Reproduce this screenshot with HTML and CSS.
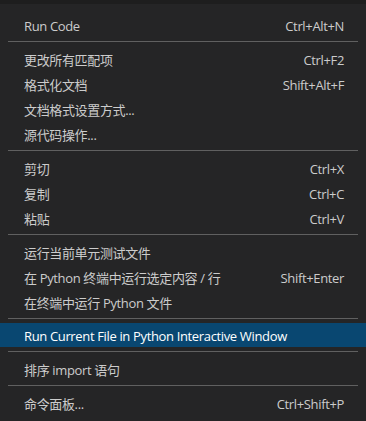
FILE: index.html
```html
<!DOCTYPE html>
<html lang="zh-CN">
<head>
<meta charset="UTF-8">
<title>Context menu</title>
<link rel="stylesheet" href="styles.css">
</head>
<body>
<div class="topbar"></div>
<ul class="menu">
  <li class="item"><span class="label">Run Code</span><span class="key">Ctrl+Alt+N</span></li>
  <li class="sep"></li>
  <li class="item"><span class="label">更改所有匹配项</span><span class="key">Ctrl+F2</span></li>
  <li class="item"><span class="label">格式化文档</span><span class="key">Shift+Alt+F</span></li>
  <li class="item"><span class="label">文档格式设置方式...</span></li>
  <li class="item"><span class="label">源代码操作...</span></li>
  <li class="sep"></li>
  <li class="item"><span class="label">剪切</span><span class="key">Ctrl+X</span></li>
  <li class="item"><span class="label">复制</span><span class="key">Ctrl+C</span></li>
  <li class="item"><span class="label">粘贴</span><span class="key">Ctrl+V</span></li>
  <li class="sep"></li>
  <li class="item"><span class="label">运行当前单元测试文件</span></li>
  <li class="item"><span class="label">在 Python 终端中运行选定内容 / 行</span><span class="key">Shift+Enter</span></li>
  <li class="item"><span class="label">在终端中运行 Python 文件</span></li>
  <li class="sep"></li>
  <li class="item active"><span class="label">Run Current File in Python Interactive Window</span></li>
  <li class="sep"></li>
  <li class="item"><span class="label">排序 import 语句</span></li>
  <li class="sep"></li>
  <li class="item"><span class="label">命令面板...</span><span class="key">Ctrl+Shift+P</span></li>
</ul>
</body>
</html>
```

FILE: styles.css
```css
body {
    margin: 0;
    padding: 0;
    background-color: #252526;
    font-family: "Open Sans", "Noto Sans CJK SC", sans-serif;
    font-size: 13px;
    letter-spacing: -0.35px;
    color: #cccccc;
    height: 421px;
    overflow: hidden;
}

.topbar {
    height: 4px;
    background-color: #1e1e1e;
}

.menu {
    list-style: none;
    margin: 0;
    padding: 8px 0 0 0;
}

.item {
    box-sizing: border-box;
    display: flex;
    align-items: center;
    justify-content: space-between;
    height: 25px;
    padding: 2px 22px 0 24px;
    white-space: nowrap;
}

/* highlighted entry */
.item.active {
    height: 24px;
    margin-top: 1px;
    padding-top: 1px;
    background-color: #094771;
    color: #ffffff;
}

.sep {
    height: 1px;
    margin: 4px 8px;
    background-color: #606060;
}

.key {
    margin-left: 20px;
}
```
